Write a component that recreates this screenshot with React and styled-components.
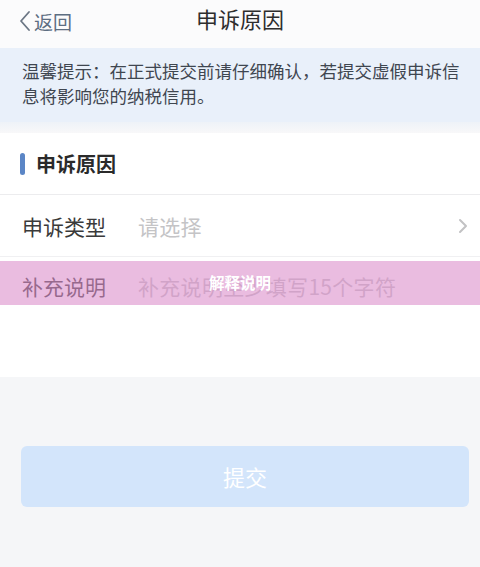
import React from "react";
import styled, { createGlobalStyle } from "styled-components";

const GlobalStyle = createGlobalStyle`
  html, body {
    margin: 0;
    padding: 0;
    background: #f5f6f8;
    font-family: "Noto Sans CJK SC", "Noto Sans", sans-serif;
  }
  * { box-sizing: border-box; }
`;

const Page = styled.div`
  width: 480px;
  height: 567px;
  overflow: hidden;
  position: relative;
  background: #f5f6f8;
`;

const NavBar = styled.header`
  height: 48px;
  background: #fbfbfc;
  display: flex;
  align-items: center;
  position: relative;
  padding-left: 18px;
`;

const Back = styled.div`
  display: flex;
  align-items: center;
  gap: 2px;
  color: #5d6e82;
  font-size: 19px;
  line-height: 1;
  margin-top: -6px;
`;

const Title = styled.h1`
  position: absolute;
  left: 0;
  right: 0;
  top: 0;
  margin: 0;
  height: 42px;
  line-height: 36px;
  text-align: center;
  font-size: 22px;
  font-weight: 400;
  color: #2e2e2e;
  pointer-events: none;
`;

const Notice = styled.div`
  background: #e9f0fa;
  padding: 10px 18px 0 22px;
  height: 74px;
  font-size: 17.5px;
  line-height: 25px;
  color: #3f4650;
`;

const Gap = styled.div`
  height: 11px;
  background: linear-gradient(#eef2f8, #f8f8f9);
`;

const Card = styled.section`
  background: #ffffff;
  height: 244px;
`;

const SectionHead = styled.div`
  height: 62px;
  display: flex;
  align-items: center;
  gap: 11px;
  padding-left: 20px;
  border-bottom: 1px solid #ececee;
  font-size: 20px;
  font-weight: 700;
  color: #2a2a2a;
`;

const Bar = styled.span`
  width: 5px;
  height: 22px;
  border-radius: 3px;
  background: #5b86c6;
`;

const Row = styled.div`
  height: ${(p) => p.h}px;
  display: flex;
  align-items: ${(p) => (p.top ? "flex-start" : "center")};
  padding: ${(p) => (p.top ? "14px" : "0")} 10px 0 22px;
  border-bottom: ${(p) => (p.divided ? "1px solid #f0f0f2" : "none")};
`;

const Label = styled.span`
  width: 116px;
  font-size: 21px;
  color: #3a3a3a;
`;

const Placeholder = styled.span`
  flex: 1;
  font-size: 21px;
  letter-spacing: 0.3px;
  color: #c4c4c6;
`;

const Chevron = styled.svg`
  width: 14px;
  height: 18px;
`;

const Footer = styled.div`
  padding: 69px 11px 0 21px;
`;

const Submit = styled.button`
  width: 448px;
  height: 61px;
  border: none;
  border-radius: 6px;
  background: #d3e5fb;
  color: #ffffff;
  font-family: inherit;
  font-size: 22px;
  padding: 0 0 2px;
`;

const Watermark = styled.div`
  position: absolute;
  left: 0;
  right: 0;
  top: 261px;
  height: 44px;
  background: rgba(218, 140, 202, 0.58);
  display: flex;
  justify-content: center;
  align-items: center;
`;

const WatermarkText = styled.span`
  color: #ffffff;
  font-size: 15.5px;
  font-weight: 700;
  margin-top: -2px;
`;

export default function App() {
  return (
    <Page>
      <GlobalStyle />
      <NavBar>
        <Back>
          <svg width="14" height="22" viewBox="0 0 14 22">
            <path d="M11 2 L3 11 L11 20" fill="none" stroke="#6b7684" strokeWidth="1.8" strokeLinecap="round" strokeLinejoin="round" />
          </svg>
          <span>返回</span>
        </Back>
        <Title>申诉原因</Title>
      </NavBar>
      <Notice>温馨提示：在正式提交前请仔细确认，若提交虚假申诉信息将影响您的纳税信用。</Notice>
      <Gap />
      <Card>
        <SectionHead>
          <Bar />
          申诉原因
        </SectionHead>
        <Row h={62} divided>
          <Label>申诉类型</Label>
          <Placeholder>请选择</Placeholder>
          <Chevron viewBox="0 0 14 18">
            <path d="M4 3 L10 9 L4 15" fill="none" stroke="#c2c2c4" strokeWidth="2" strokeLinecap="round" strokeLinejoin="round" />
          </Chevron>
        </Row>
        <Row h={119} top>
          <Label>补充说明</Label>
          <Placeholder>补充说明至少填写15个字符</Placeholder>
        </Row>
      </Card>
      <Footer>
        <Submit>提交</Submit>
      </Footer>
      <Watermark>
        <WatermarkText>解释说明</WatermarkText>
      </Watermark>
    </Page>
  );
}
